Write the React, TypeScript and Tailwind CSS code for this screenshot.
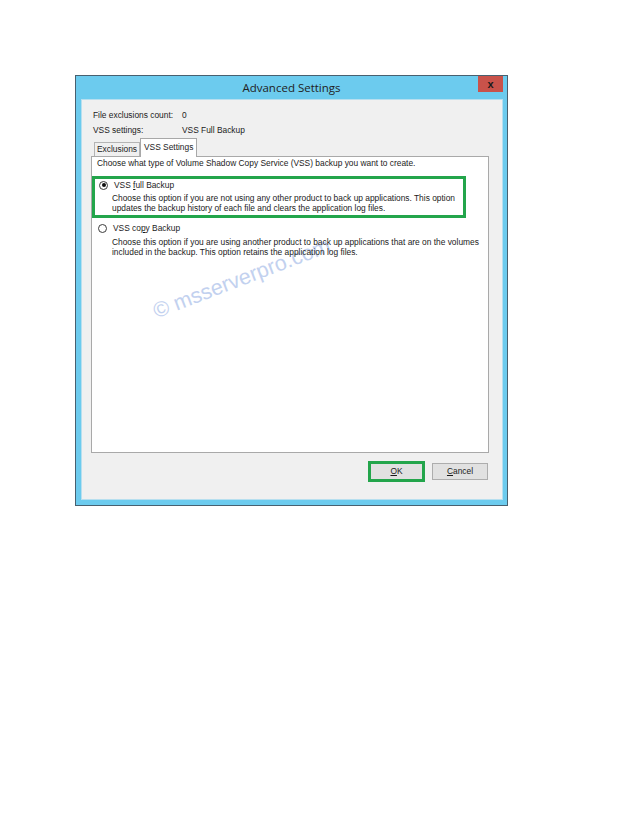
import React from "react";

function Radio({ checked }: { checked?: boolean }) {
  return (
    <span className="w-[9px] h-[9px] rounded-full border border-[#3c3c3c] bg-white flex items-center justify-center shrink-0">
      {checked && <span className="w-[4px] h-[4px] rounded-full bg-[#111]" />}
    </span>
  );
}

export default function App() {
  return (
    <div
      className="w-[638px] h-[826px] bg-white pt-[75px] pl-[75px] text-[#1b1b1b]"
      style={{ fontFamily: '"Liberation Sans", Arial, sans-serif' }}
    >
      <div className="w-[433px] h-[431px] border border-[#48606f] bg-[#6ccbee] flex flex-col">
        {/* title bar */}
        <div className="relative h-[23px] shrink-0 flex items-center justify-center">
          <span className="text-[11.5px] text-[#222] mt-[1px]" style={{ fontFamily: '"Open Sans", "Liberation Sans", sans-serif' }}>
            Advanced Settings
          </span>
          <div className="absolute right-[4px] top-0 w-[25px] h-[16px] bg-[#c9524a] flex items-center justify-center">
            <span className="text-[11px] font-bold text-[#1a1a1a] leading-none">x</span>
          </div>
        </div>
        {/* client area */}
        <div className="flex-1 ml-[5px] mr-[4px] mb-[5px] bg-[#f0f0f0] border border-[#b7dfef] flex flex-col text-[8.4px]">
          <div className="pl-[11px] pt-[8px]">
            <div className="flex h-[15px] items-center">
              <span className="w-[89px]">File exclusions count:</span>
              <span>0</span>
            </div>
            <div className="flex h-[15px] items-center">
              <span className="w-[89px]">VSS settings:</span>
              <span>VSS Full Backup</span>
            </div>
          </div>
          <div className="ml-[9px] w-[398px]">
            {/* tabs */}
            <div className="flex items-end h-[18px] pl-[3px] relative z-10">
              <div className="h-[14px] px-[2px] border border-b-0 border-[#b4b4b4] bg-[#f0f0f0] flex items-center">
                Exclusions
              </div>
              <div className="h-[19px] -mb-[1px] px-[3px] border border-b-0 border-[#a8a8a8] bg-white flex items-start pt-[2px]">
                VSS Settings
              </div>
            </div>
            {/* panel */}
            <div className="relative h-[297px] border border-[#a9a9a9] bg-white">
              {/* watermark */}
              <div
                className="absolute left-[62px] top-[139px] text-[21.5px] text-[#b3c6ec] opacity-80 whitespace-nowrap origin-left -rotate-[21deg]"
                style={{ fontFamily: '"Liberation Sans", Arial, sans-serif' }}
              >
                © msserverpro.com
              </div>
              <div className="relative">
                <div className="h-[12px] leading-[12px] pl-[5px]">
                  Choose what type of Volume Shadow Copy Service (VSS) backup you want to create.
                </div>
                <div className="mt-[7px] w-[374px] h-[42px] border-[3px] border-[#23a54b]">
                  <div className="flex items-center h-[12px] pl-[4px]">
                    <Radio checked />
                    <span className="ml-[6px]">
                      VSS <span className="underline">f</span>ull Backup
                    </span>
                  </div>
                  <div className="pl-[17px] mt-[2px] leading-[10px]">
                    Choose this option if you are not using any other product to back up applications. This option
                    <br />
                    updates the backup history of each file and clears the application log files.
                  </div>
                </div>
                <div className="mt-[4px] flex items-center h-[12px] pl-[6px]">
                  <Radio />
                  <span className="ml-[6px]">
                    VSS co<span className="underline">p</span>y Backup
                  </span>
                </div>
                <div className="pl-[20px] mt-[3px] leading-[10px]">
                  Choose this option if you are using another product to back up applications that are on the volumes
                  <br />
                  included in the backup. This option retains the application log files.
                </div>
              </div>
            </div>
          </div>
          {/* buttons */}
          <div className="flex justify-end items-center gap-[7px] pr-[14px] mt-[8px]">
            <div className="w-[57px] h-[21px] border-[3px] border-[#23a54b] bg-[#e1e1e1] flex items-center justify-center">
              <span><span className="underline">O</span>K</span>
            </div>
            <div className="w-[56px] h-[17px] border border-[#adadad] bg-[#e1e1e1] flex items-center justify-center">
              <span><span className="underline">C</span>ancel</span>
            </div>
          </div>
        </div>
      </div>
    </div>
  );
}
